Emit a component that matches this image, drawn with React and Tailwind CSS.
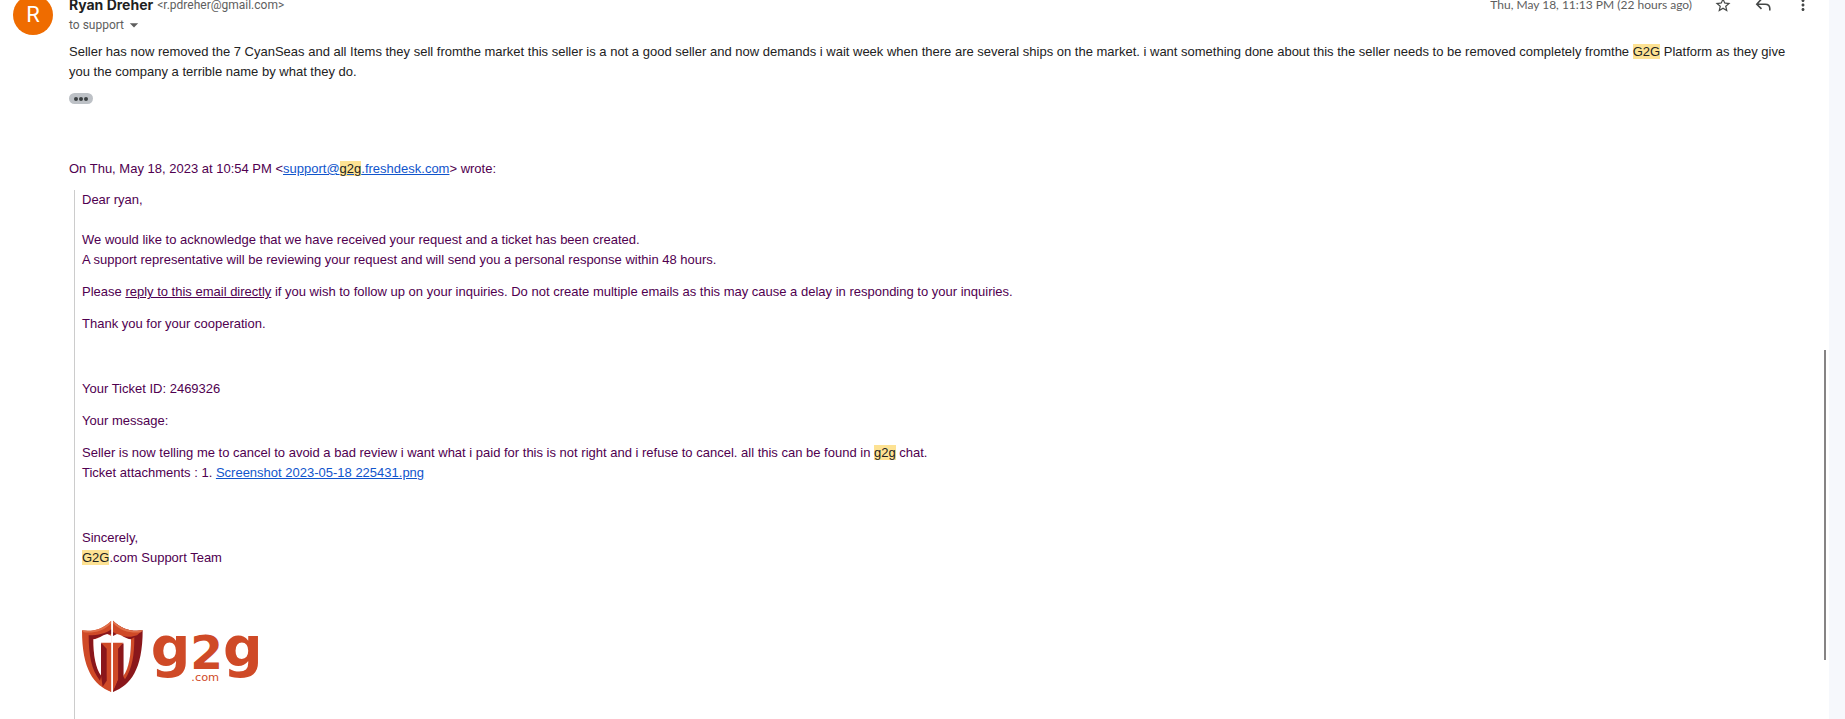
import { MdArrowDropDown, MdMoreVert, MdStarBorder } from 'react-icons/md';

const Mark = ({ children }) => <mark className="bg-[#fde293] text-[#222222]">{children}</mark>;

const ReplyIcon = () => (
  <svg width="18" height="18" viewBox="0 0 18 18" fill="none" stroke="currentColor" strokeWidth="1.6">
    <path d="M7.5 3 2.8 8.2l4.7 4.7M3 8.2h8.2c2.8 0 4.6 1.8 4.6 4.4v2" />
  </svg>
);

const Logo = () => (
  <svg width="184" height="74" viewBox="0 0 552 222" role="img" aria-label="g2g.com">
    {/* left half of the shield */}
    <path fill="#cf4a27" d="M88 2v214C35 196 0 148 0 31c34 4 62-3 88-29Z" />
    <path fill="#e0704a" d="M0 31c34 4 62-3 88-29v7C64 34 36 40 5 37Z" />
    <path fill="#8a171b" d="M88 28v14C70 44 50 52 36 58L20 46c30 0 52-6 68-18ZM20 46l14 10c0 48 6 84 24 112l-4 14C28 150 20 104 20 46Z" />
    <path fill="#fff" d="M34 58c18-2 28-14 42-16l12 6v24H58v96C40 144 34 104 34 58Z" />
    <path fill="#cf4a27" d="M57 68h31v148l-26-16 11-18V86L57 68Z" />
    <path fill="#8a171b" d="M57 68l17 18v96l-12 18-5-34V68Z" />
    {/* right half, lit from the other side */}
    <path fill="#8a171b" d="M93 2v214c53-20 89-68 89-185-34 4-63-3-89-29Z" />
    <path fill="#cf4a27" d="M182 31c-34 4-63-3-89-29v34c18 12 36 16 54 14l18-4 17-15Z" />
    <path fill="#e0704a" d="M182 31c-34 4-63-3-89-29v7c24 25 52 31 84 28Z" />
    <path fill="#cf4a27" d="M147 58l10-6c0 54-6 92-28 126l-6-10c18-26 24-62 24-110Z" />
    <path fill="#fff" d="M147 58c-18-2-28-14-42-16l-12 6v24h31v96c18-24 23-64 23-110Z" />
    <path fill="#cf4a27" d="M93 68h31l-15 18v92l-8 20-8 16Z" />
    <path fill="#8a171b" d="M124 68v100l-10 22-21 26 16-38V86l15-18Z" />
    <path fill="#fff" d="M88 0h5v222h-5Z" />
    <g fill="#cf4a27" fontFamily="DejaVu Sans">
      <text x="206" y="138" fontWeight="700" fontSize="166">
        g<tspan y="147" fontSize="141">2</tspan><tspan y="138" fontSize="166">g</tspan>
      </text>
      <text x="328" y="183" fontSize="34">.com</text>
    </g>
  </svg>
);

const App = () => (
  <div className="relative flex min-h-screen overflow-hidden bg-[#f6f8fc] pr-4 font-['Liberation_Sans',Arial,sans-serif] text-[13px] leading-5">
    <main className="flex flex-1 flex-col bg-white pl-[13px] pr-[17px]">
      <header className="-mt-[5px] flex gap-4 font-['Roboto',sans-serif] text-xs leading-5 text-[#5e5e5e]">
        <div className="flex h-10 w-10 items-center justify-center rounded-full bg-[#ef6c00] text-[22px] text-white">R</div>
        <div className="flex-1">
          <div className="flex items-center gap-1">
            <h3 className="font-['Inter',sans-serif] text-sm leading-5 font-bold text-[#1f1f1f]">Ryan Dreher</h3>
            <span>&lt;r.pdreher@gmail.com&gt;</span>
          </div>
          <button className="flex items-center">to support <MdArrowDropDown size={20} /></button>
        </div>
        <div className="flex h-5 items-center gap-[22px] text-[#444746]">
          <time className="font-['Lato',sans-serif] text-[#5e5e5e]">Thu, May 18, 11:13 PM (22 hours ago)</time>
          <button aria-label="Star"><MdStarBorder size={18} /></button>
          <button aria-label="Reply"><ReplyIcon /></button>
          <button aria-label="More"><MdMoreVert size={18} /></button>
        </div>
      </header>

      <div className="flex flex-1 flex-col pl-14">
        <p className="mt-[7px] pr-5 text-[#222222]">
          Seller has now removed the 7 CyanSeas and all Items they sell fromthe market this seller is a not a good seller and now demands i wait week when there are several ships on the market. i want something done about this the seller needs to be removed completely fromthe <Mark>G2G</Mark> Platform as they give you the company a terrible name by what they do.
        </p>

        <button aria-label="Hide expanded content" className="mt-[11px] flex h-[11px] w-6 items-center justify-center gap-px rounded-full bg-[#bdc1c6]">
          <span className="h-1 w-1 rounded-full bg-[#3c4043]" />
          <span className="h-1 w-1 rounded-full bg-[#3c4043]" />
          <span className="h-1 w-1 rounded-full bg-[#3c4043]" />
        </button>

        <div className="mt-[55px] flex flex-1 flex-col text-[#500050]">
          <p>
            On Thu, May 18, 2023 at 10:54 PM &lt;
            <a href="mailto:support@g2g.freshdesk.com" className="text-[#1155cc] underline">support@<Mark>g2g</Mark>.freshdesk.com</a>
            &gt; wrote:
          </p>

          <blockquote className="ml-[5px] mt-[11px] flex flex-1 flex-col gap-3 border-l border-[#cccccc] pl-[7px]">
            <p>
              Dear ryan,<br /><br />
              We would like to acknowledge that we have received your request and a ticket has been created.<br />
              A support representative will be reviewing your request and will send you a personal response within 48 hours.
            </p>
            <p>Please <u>reply to this email directly</u> if you wish to follow up on your inquiries. Do not create multiple emails as this may cause a delay in responding to your inquiries.</p>
            <p>Thank you for your cooperation.</p>
            <p className="h-[21px]" />
            <p>Your Ticket ID: 2469326</p>
            <p>Your message:</p>
            <p>
              Seller is now telling me to cancel to avoid a bad review i want what i paid for this is not right and i refuse to cancel. all this can be found in <Mark>g2g</Mark> chat.<br />
              Ticket attachments : 1. <a href="#attachment" className="text-[#1155cc] underline">Screenshot 2023-05-18 225431.png</a>
            </p>
            <p className="h-[21px]" />
            <p>
              Sincerely,<br />
              <Mark>G2G</Mark>.com Support Team
            </p>
            <div className="mt-10">
              <Logo />
            </div>
          </blockquote>
        </div>
      </div>
    </main>

    {/* scroll thumb */}
    <div className="absolute right-[19px] top-[350px] h-[310px] w-0.5 bg-[#868484]" />
  </div>
);

export default App;
